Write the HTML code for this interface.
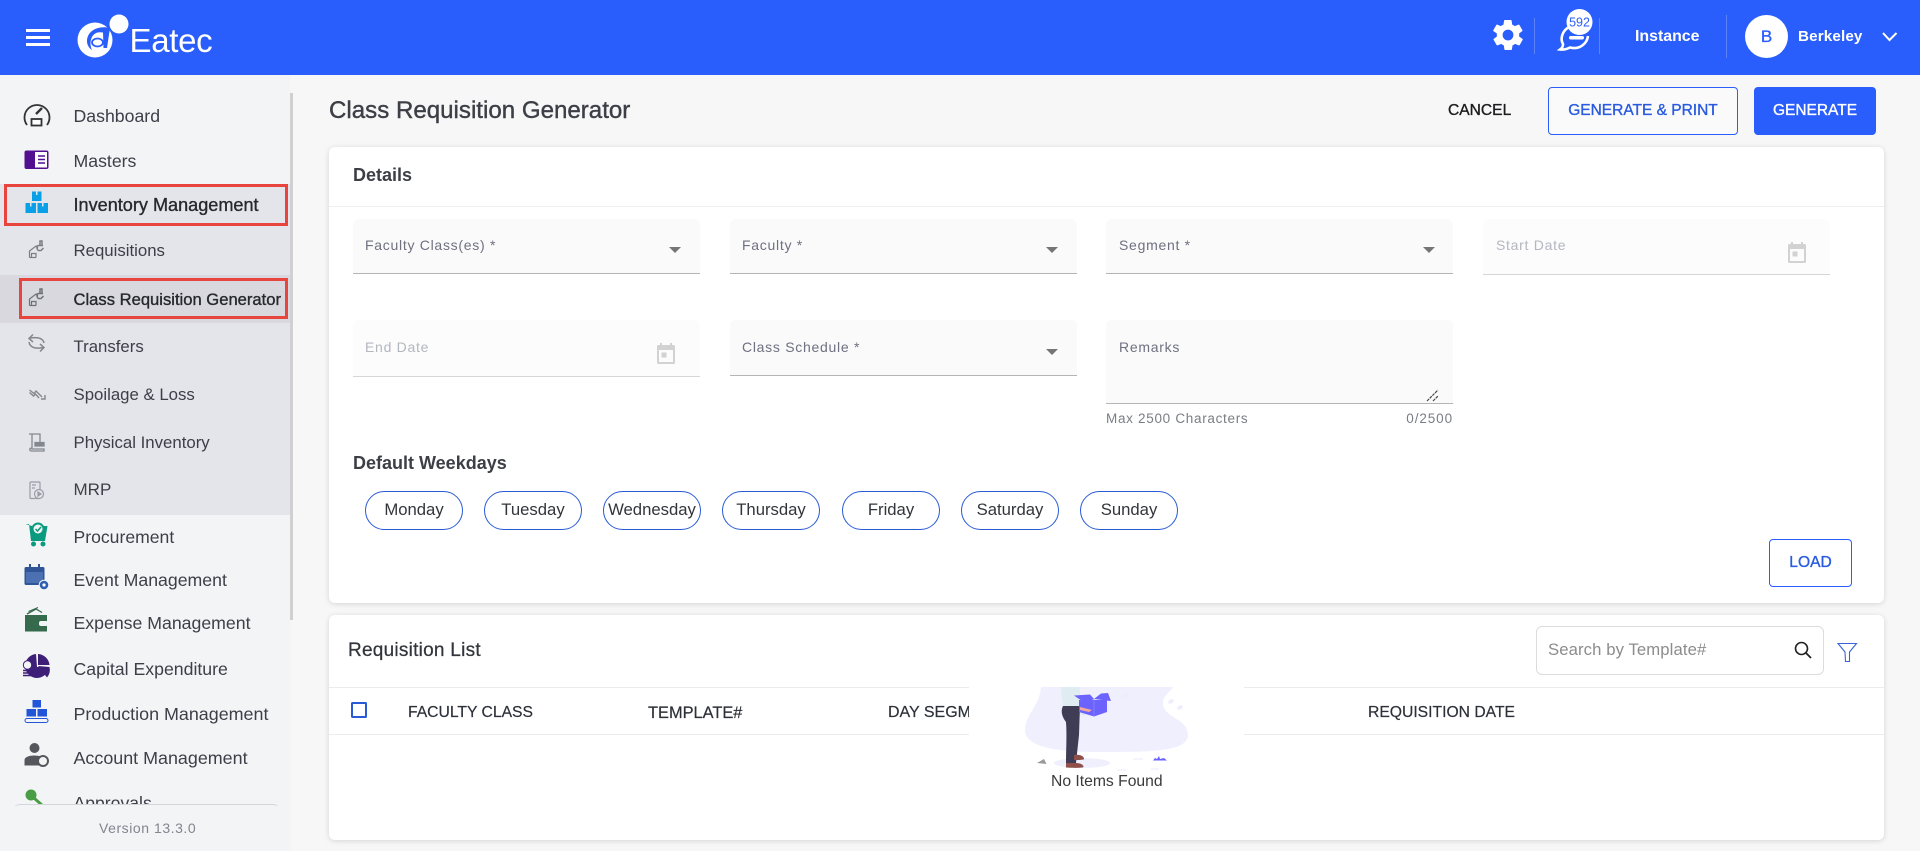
<!DOCTYPE html>
<html><head><meta charset="utf-8"><title>Class Requisition Generator</title>
<style>
*{box-sizing:border-box;margin:0;padding:0}
html,body{width:1920px;height:851px;overflow:hidden;background:#f7f7f7;font-family:"Liberation Sans",sans-serif;color:#3a3d46}
.a{position:absolute}
.t{position:absolute;white-space:nowrap;line-height:20px;height:20px}
.m{font-size:17.7px;color:#3c3f48;left:73.5px}
.b{-webkit-text-stroke:.35px currentColor}
.card{position:absolute;background:#fff;border-radius:6px;box-shadow:0 1px 6px rgba(0,0,0,.14)}
.f{position:absolute;background:#fafafa;border-radius:6px 6px 0 0;border-bottom:1px solid #b5b5b5;width:347px}
.f.d{background:#fcfcfc;border-bottom-color:#d6d6d6}
.l{font-size:14px;letter-spacing:.72px;color:#6f7080}
.l.d{color:#b4b6c0}
.chip{position:absolute;top:491px;height:39px;width:98px;border:1px solid #2a5bd7;border-radius:20px;text-align:center;line-height:36px;font-size:16.7px;color:#33353c;background:#fff;white-space:nowrap}
.arr{position:absolute;width:0;height:0;border-left:6.5px solid transparent;border-right:6.5px solid transparent;border-top:6.5px solid #757575}
.th{font-size:15.7px;color:#2c3038;top:703px;-webkit-text-stroke:.2px #2c3038}
svg{position:absolute;overflow:visible}
</style></head><body>

<!-- top bar -->
<div class="a" style="left:0;top:0;width:1920px;height:75px;background:#2a5efc"></div>
<div class="a" style="left:26px;top:29px;width:24px;height:3px;background:#fff"></div>
<div class="a" style="left:26px;top:36px;width:24px;height:3px;background:#fff"></div>
<div class="a" style="left:26px;top:43px;width:24px;height:3px;background:#fff"></div>
<svg style="left:0;top:0" width="140" height="75">
<circle cx="95" cy="40" r="17.5" fill="#fff"/>
<path d="M110 28C98 25 87 31 87 41C87 45 89 48 92 50C90 46 90 41 92 37C94 33 98 31.500 103 32.500L103.500 48L107 48Z" fill="#2a5efc"/>
<ellipse cx="97.500" cy="42.500" rx="5.500" ry="4" fill="none" stroke="#2a5efc" stroke-width="1.800"/>
<circle cx="119" cy="24" r="11.500" fill="#2a5efc"/>
<circle cx="119" cy="24" r="9.500" fill="#fff"/>
</svg>
<div class="t" style="left:129.500px;top:26px;height:30px;line-height:30px;font-size:33px;color:#fff;letter-spacing:-.3px;font-weight:400">Eatec</div>

<svg style="left:1490px;top:17px" width="36" height="36" viewBox="0 0 24 24"><path fill="#fff" d="M19.4 13a7.5 7.5 0 0 0 0-2l2.1-1.6a.5.5 0 0 0 .1-.6l-2-3.5a.5.5 0 0 0-.6-.2l-2.5 1a7.3 7.3 0 0 0-1.7-1l-.4-2.7a.5.5 0 0 0-.5-.4h-4a.5.5 0 0 0-.5.4l-.4 2.7a7.3 7.3 0 0 0-1.7 1l-2.5-1a.5.5 0 0 0-.6.2l-2 3.5a.5.5 0 0 0 .1.6L4.6 11a7.5 7.5 0 0 0 0 2l-2.100 1.600a.5.5 0 0 0-.1.6l2 3.500a.5.5 0 0 0 .6.2l2.500-1a7.300 7.300 0 0 0 1.700 1l.4 2.700a.5.5 0 0 0 .5.4h4a.5.5 0 0 0 .5-.4l.4-2.700a7.300 7.300 0 0 0 1.700-1l2.500 1a.5.5 0 0 0 .6-.2l2-3.500a.5.5 0 0 0-.1-.6zM12 15.600a3.600 3.600 0 1 1 0-7.200 3.600 3.600 0 0 1 0 7.200z"/></svg>
<div class="a" style="left:1534px;top:18px;width:1px;height:36px;background:#5d83fa"></div>
<svg style="left:1555px;top:10px" width="45" height="45">
<path d="M14 17C7 21 5 29 8 34C8 37 7 38 5 39.500C9 40 12 39 15 37.500C24 40 32 34 33 26" fill="none" stroke="#fff" stroke-width="2.600"/>
<rect x="14" y="26" width="15" height="3.500" rx="1.700" fill="#fff"/>
<circle cx="24.500" cy="12" r="13" fill="#fff"/>
<text x="24.500" y="16.500" text-anchor="middle" font-size="12.500" fill="#2a5efc" font-family="Liberation Sans">592</text>
</svg>
<div class="a" style="left:1599px;top:18px;width:1px;height:36px;background:#5d83fa"></div>
<div class="t" style="left:1635px;top:27px;font-size:15.900px;font-weight:bold;color:#fff">Instance</div>
<div class="a" style="left:1726px;top:15px;width:1px;height:43px;background:#5d83fa"></div>
<div class="a b" style="left:1745px;top:15px;width:43px;height:43px;border-radius:50%;background:#fff;text-align:center;line-height:43px;font-size:17px;color:#2a5efc">B</div>
<div class="t" style="left:1798px;top:26.500px;font-size:15.200px;font-weight:bold;color:#fff;letter-spacing:.15px">Berkeley</div>
<svg style="left:1880px;top:30px" width="20" height="14"><path d="M3 3L9.500 10L16.500 3" fill="none" stroke="#fff" stroke-width="2"/></svg>

<!-- sidebar -->
<div class="a" style="left:0;top:75px;width:290px;height:776px;background:#f3f4f6;overflow:hidden">
 <div class="a" style="left:0;top:109px;width:290px;height:331px;background:#e4e5ea"></div>
 <div class="a" style="left:0;top:200px;width:290px;height:48px;background:#d8d8de"></div>
</div>
<div class="a" style="left:290px;top:93px;width:3px;height:527px;background:#d0d0d0"></div>
<div class="a" style="left:290px;top:620px;width:3px;height:231px;background:#f6f6f6"></div>

<div class="t m" style="top:106px">Dashboard</div>
<div class="t m" style="top:151px">Masters</div>
<div class="t m b" style="top:195px;font-size:18.100px;color:#26282e;">Inventory Management</div>
<div class="t m" style="top:240.500px;font-size:16.800px">Requisitions</div>
<div class="t m b" style="top:289.500px;font-size:16.600px;color:#26282e">Class Requisition Generator</div>
<div class="t m" style="top:336.500px;font-size:16.800px">Transfers</div>
<div class="t m" style="top:384.500px;font-size:16.800px">Spoilage &amp; Loss</div>
<div class="t m" style="top:432.500px;font-size:16.800px">Physical Inventory</div>
<div class="t m" style="top:479.500px;font-size:17px">MRP</div>
<div class="t m" style="top:526.500px;font-size:17.600px">Procurement</div>
<div class="t m" style="top:569.500px;font-size:17.700px">Event Management</div>
<div class="t m" style="top:612.500px;font-size:17.700px">Expense Management</div>
<div class="t m" style="top:658.500px;font-size:17.700px">Capital Expenditure</div>
<div class="t m" style="top:703.500px;font-size:17.900px">Production Management</div>
<div class="t m" style="top:747.500px;font-size:17.900px">Account Management</div>
<div class="t m" style="top:792.500px;font-size:17.600px">Approvals</div>

<!-- red boxes -->
<div class="a" style="left:4px;top:184px;width:284px;height:42px;border:3px solid #e8453f"></div>
<div class="a" style="left:19px;top:278px;width:269px;height:41px;border:3px solid #e8453f"></div>

<!-- sidebar icons -->
<svg style="left:0;top:90px" width="60" height="761">
 <g fill="none" stroke="#333" stroke-width="1.800"><path d="M27 35A12.500 12.500 0 1 1 47 35"/></g>
 <path d="M36 24L42 18" stroke="#333" stroke-width="2.400"/>
 <rect x="31.500" y="29" width="10" height="6.500" fill="#fff" stroke="#333" stroke-width="1.800"/>
 <rect x="24.500" y="60.500" width="24" height="18.500" rx="2" fill="#520f8f"/>
 <rect x="35" y="62" width="12" height="15.500" fill="#fff"/>
 <path d="M38 66h7M38 69.500h7M38 73h7" stroke="#520f8f" stroke-width="1.400"/>
 <g fill="#0aa0e8">
  <rect x="32" y="101.500" width="9.500" height="9.500"/><rect x="25.500" y="113" width="10.500" height="10"/><rect x="37.500" y="113" width="10.500" height="10"/>
 </g>
 <g fill="#e4e5ea"><rect x="36" y="101.500" width="1.500" height="3.500"/><rect x="30" y="113" width="1.500" height="3.500"/><rect x="42" y="113" width="1.500" height="3.500"/></g>
 <g fill="none" stroke="#7b7d85" stroke-width="1.200">
  <path d="M29.500 167.500V161L36 156L38 158M36 167.500H29.500M31.500 167.500V163.500H36V167.500"/>
  <path d="M38 160.500C36 157 37 155.500 39 155.500H43M40 155.500V151H42V155M38 160.500H41L43.500 158" stroke-width="1.500"/>
 </g>
 <g fill="none" stroke="#6f7179" stroke-width="1.200" transform="translate(0,48)">
  <path d="M29.500 167.500V161L36 156L38 158M36 167.500H29.500M31.500 167.500V163.500H36V167.500"/>
  <path d="M38 160.500C36 157 37 155.500 39 155.500H43M40 155.500V151H42V155M38 160.500H41L43.500 158" stroke-width="1.500"/>
 </g>
 <g fill="none" stroke="#85878f" stroke-width="1.500">
  <path d="M44 253C43 248 37 247 30 248M33 244.500L29 248.500L33 252"/>
  <path d="M29 252C30 258 36 259 43 257.500M40 254L44 257.500L40 261.500"/>
 </g>
 <g fill="none" stroke="#85878f" stroke-width="1.400">
  <path d="M29.500 300L34 303.500L36 301L42 307"/><path d="M29.500 302.500L33.500 306L35.500 304L39 308"/>
  <path d="M41 309H45V305"/>
 </g>
 <g fill="none" stroke="#85878f" stroke-width="1.300">
  <path d="M29 344H40V355M32 344V359H44V361H32C29 361 29 358 32 358"/><path d="M35 352.500H44V356H35z" fill="#85878f"/>
 </g>
 <g fill="none" stroke="#9a9ca6" stroke-width="1.200">
  <rect x="30" y="392" width="10" height="16.500" rx="1"/><circle cx="39" cy="404" r="4.500" fill="#e4e5ea"/>
  <path d="M38 402L41 404L38 406Z" fill="#9a9ca6"/><path d="M32 395H36M32 398H35"/>
 </g>
 <g fill="#0a9a7e">
  <path d="M25.500 434H29L31 451H45L47.500 436H44C44 443 33 444 32 436Z"/>
  <circle cx="38" cy="439" r="6.500"/>
  <circle cx="33.500" cy="454" r="2.500"/><circle cx="43" cy="454" r="2.500"/>
 </g>
 <circle cx="38" cy="439" r="4.500" fill="#f3f4f6"/><path d="M35.500 439L37.500 441L41 437" stroke="#0a9a7e" fill="none" stroke-width="1.500"/>
 <rect x="24.500" y="477" width="20" height="18" rx="1.500" fill="#2f5597"/>
 <rect x="29" y="474" width="2" height="4" fill="#2f5597"/><rect x="38" y="474" width="2" height="4" fill="#2f5597"/>
 <rect x="26" y="482" width="17" height="11" fill="#4c71b3"/>
 <circle cx="44" cy="495" r="4.800" fill="#2f5fb0" stroke="#f3f4f6" stroke-width="1"/><circle cx="44" cy="495" r="1.600" fill="#fff"/>
 <path d="M25 525H47V541.500H25Z" fill="#356a4c"/>
 <path d="M27 524L36 519L42 522.500" stroke="#356a4c" stroke-width="1.300" fill="none"/>
 <path d="M28.500 521.500L38 517.500" stroke="#356a4c" stroke-width="1"/>
 <rect x="39" y="531" width="9" height="5" rx="2" fill="#f3f4f6"/>
 <path d="M36 564A12 12 0 1 0 49 577H37Z" fill="#3d1f78"/>
 <path d="M38 564A12 12 0 0 1 49.500 575H38Z" fill="#3d1f78"/>
 <path d="M38 576L47 587.500A12 12 0 0 0 49.500 577Z" fill="#3d1f78"/>
 <circle cx="27.500" cy="575" r="4.200" fill="#f3f4f6" stroke="#3d1f78"/>
 <path d="M23 580.500h8M23 583h8M23 585.500h8" stroke="#3d1f78" stroke-width="1.600"/>
 <g fill="#2355d9"><rect x="32.500" y="610" width="8.500" height="7.500"/><rect x="26.500" y="619" width="9.500" height="7.500"/><rect x="37.500" y="619" width="9.500" height="7.500"/></g>
 <rect x="25" y="628.500" width="23" height="4" rx="2" fill="#f3f4f6" stroke="#2355d9"/>
 <circle cx="34.500" cy="658" r="5" fill="#55575c"/>
 <path d="M24.500 675.500V670C24.500 664 44 664 44 670V675.500Z" fill="#55575c"/>
 <circle cx="43" cy="671" r="5" fill="#f3f4f6" stroke="#55575c" stroke-width="2"/>
 <circle cx="31" cy="705" r="5.500" fill="#4a9d45"/>
 <path d="M34 708L43 716" stroke="#4a9d45" stroke-width="3"/>
</svg>

<!-- version footer -->
<div class="a" style="left:12px;top:804px;width:269px;height:47px;background:#f3f4f6;border-top:1px solid #d4d5db;border-radius:8px 8px 0 0"></div>
<div class="a" style="left:0;top:806px;width:290px;height:45px;background:#f3f4f6"></div>
<div class="t" style="left:99px;top:818px;font-size:14px;color:#83858f;letter-spacing:.55px">Version 13.3.0</div>

<!-- page head -->
<div class="t" style="left:329px;top:99px;height:24px;line-height:24px;font-size:24.100px;color:#3d3f47;-webkit-text-stroke:.4px #3d3f47">Class Requisition Generator</div>
<div class="t b" style="left:1448px;top:100.500px;font-size:15.600px;color:#1d1d1f">CANCEL</div>
<div class="a b" style="left:1548px;top:87px;width:190px;height:48px;border:1px solid #2a5efc;border-radius:4px;background:#fafafa;color:#2a5bdf;text-align:center;line-height:46px;font-size:15.500px">GENERATE &amp; PRINT</div>
<div class="a b" style="left:1754px;top:87px;width:122px;height:48px;border-radius:4px;background:#2a5efc;color:#fff;text-align:center;line-height:48px;font-size:15.500px">GENERATE</div>

<!-- details card -->
<div class="card" style="left:329px;top:147px;width:1555px;height:456px"></div>
<div class="t" style="left:353px;top:165px;font-size:18px;font-weight:bold;color:#3d3f47">Details</div>
<div class="a" style="left:329px;top:206px;width:1555px;height:1px;background:#eeeef0"></div>

<div class="f" style="left:353px;top:219px;height:55px"></div>
<div class="f" style="left:730px;top:219px;height:55px"></div>
<div class="f" style="left:1106px;top:219px;height:55px"></div>
<div class="f d" style="left:1483px;top:219px;height:56px"></div>
<div class="f d" style="left:353px;top:320px;height:57px"></div>
<div class="f" style="left:730px;top:320px;height:56px"></div>
<div class="f" style="left:1106px;top:320px;height:84px"></div>

<div class="t l" style="left:365px;top:235px">Faculty Class(es) *</div>
<div class="t l" style="left:742px;top:235px">Faculty *</div>
<div class="t l" style="left:1119px;top:235px">Segment *</div>
<div class="t l d" style="left:1496px;top:235px">Start Date</div>
<div class="t l d" style="left:365px;top:337px">End Date</div>
<div class="t l" style="left:742px;top:337px">Class Schedule *</div>
<div class="t l" style="left:1119px;top:337px">Remarks</div>

<div class="arr" style="left:669px;top:247px"></div>
<div class="arr" style="left:1046px;top:247px"></div>
<div class="arr" style="left:1423px;top:247px"></div>
<div class="arr" style="left:1046px;top:349px"></div>

<svg style="left:653px;top:340px" width="26" height="26" viewBox="0 0 26 26"><path fill="#d2d2d2" d="M7 3h2v2h8V3h2v2h1.500A1.500 1.500 0 0 1 22 6.500v16a1.500 1.500 0 0 1-1.500 1.500h-15A1.500 1.500 0 0 1 4 22.500v-16A1.500 1.500 0 0 1 5.500 5H7zM6 10v12h14V10zm2.500 2.500h5v5h-5z"/></svg>
<svg style="left:1784px;top:239px" width="26" height="26" viewBox="0 0 26 26"><path fill="#d2d2d2" d="M7 3h2v2h8V3h2v2h1.500A1.500 1.500 0 0 1 22 6.500v16a1.500 1.500 0 0 1-1.500 1.500h-15A1.500 1.500 0 0 1 4 22.500v-16A1.500 1.500 0 0 1 5.500 5H7zM6 10v12h14V10zm2.500 2.500h5v5h-5z"/></svg>
<svg style="left:1426px;top:389px" width="14" height="14"><path d="M1 12L12 1M7 12L12 7" stroke="#444" stroke-width="1.200" stroke-dasharray="3 .8" fill="none"/></svg>

<div class="t" style="left:1106px;top:409px;font-size:13.500px;color:#7b7d85;letter-spacing:.7px">Max 2500 Characters</div>
<div class="t" style="left:1393px;top:409px;width:60px;text-align:right;font-size:13.500px;color:#7b7d85;letter-spacing:.9px">0/2500</div>

<div class="t" style="left:353px;top:453px;font-size:18px;font-weight:bold;color:#3d3f47">Default Weekdays</div>

<div class="chip" style="left:365px">Monday</div>
<div class="chip" style="left:484px">Tuesday</div>
<div class="chip" style="left:603px">Wednesday</div>
<div class="chip" style="left:722px">Thursday</div>
<div class="chip" style="left:842px">Friday</div>
<div class="chip" style="left:961px">Saturday</div>
<div class="chip" style="left:1080px">Sunday</div>

<div class="a b" style="left:1769px;top:539px;width:83px;height:48px;border:1px solid #2a5efc;border-radius:4px;background:#fff;color:#2a5bdf;text-align:center;line-height:46px;font-size:15.600px">LOAD</div>

<!-- requisition list card -->
<div class="card" style="left:329px;top:615px;width:1555px;height:225px"></div>
<div class="t" style="left:348px;top:641px;font-size:19px;color:#33353c;-webkit-text-stroke:.25px #33353c;letter-spacing:.25px">Requisition List</div>
<div class="a" style="left:1536px;top:626px;width:288px;height:49px;border:1px solid #dcdcdc;border-radius:6px;background:#fff"></div>
<div class="t" style="left:1548px;top:640px;font-size:16.700px;color:#8c8c8c;letter-spacing:.1px">Search by Template#</div>
<svg style="left:1793px;top:640px" width="20" height="20"><circle cx="8.500" cy="8.500" r="6" fill="none" stroke="#222" stroke-width="1.600"/><path d="M13 13L18 18" stroke="#222" stroke-width="1.800"/></svg>
<svg style="left:1837px;top:642px" width="22" height="22"><path d="M1 1.500H19.500L12.500 10V19.500H8.500L8 10Z" fill="none" stroke="#3a63d8" stroke-width="1.100"/></svg>

<div class="a" style="left:329px;top:687px;width:1555px;height:1px;background:#ececee"></div>
<div class="a" style="left:329px;top:734px;width:1555px;height:1px;background:#ececee"></div>
<div class="a" style="left:350.500px;top:702px;width:16px;height:16px;border:2px solid #2a5bd7;border-radius:1.500px"></div>
<div class="t th" style="left:408px">FACULTY CLASS</div>
<div class="t th" style="left:648px;font-size:16.400px">TEMPLATE#</div>
<div class="t th" style="left:888px;font-size:16px">DAY SEGMENT</div>
<div class="t th" style="left:1368px">REQUISITION DATE</div>

<!-- empty illustration -->
<div class="a" style="left:969px;top:687px;width:275px;height:105px;background:#fff;overflow:hidden">
<svg style="left:-969px;top:-687px" width="1920" height="851">
 <path d="M1041 687C1040 705 1025 715 1025 730C1025 748 1060 752 1100 752C1150 752 1188 752 1188 735C1188 718 1163 718 1163 703C1163 696 1170 692 1173 687Z" fill="#f0effe"/>
 <ellipse cx="1082" cy="763" rx="28" ry="5" fill="#f0effe"/>
 <path d="M1061 687H1080V705L1088 712L1084 716L1063 706Z" fill="#dfecf1"/>
 <path d="M1063 706C1060 712 1063 718 1066 722C1067 735 1066 750 1066 763H1076L1079 735L1080 706Z" fill="#3f3d56"/>
 <path d="M1074 755C1080 754 1084 756 1084 759C1084 760 1078 760 1074 760Z" fill="#8e5048"/>
 <path d="M1066 763H1076C1081 763 1083.500 765 1083.500 767C1083.500 768 1072 768 1066 767.500Z" fill="#8e5048"/>
 <path d="M1079 700H1107V712L1094 716.500L1079 712Z" fill="#6c63ff"/>
 <path d="M1074 695.500L1090 694.500L1094 699L1101 693.500L1108 693L1111 701L1094 699L1085 703Z" fill="#6c63ff"/>
 <path d="M1094 699V716" stroke="#8b84ff" stroke-width=".8"/>
 <path d="M1080 707L1092 710L1089 712L1080 710Z" fill="#f3a79d"/>
 <path d="M1037 763L1044 759L1046.500 764Z" fill="#9a9a9a"/>
 <path d="M1153 760.500H1167L1164 758L1160 759L1159 756L1157 759L1155 758Z" fill="#6c63ff"/>
 <ellipse cx="1125" cy="695.500" rx="3" ry="2" fill="#eeecfd"/>
 <ellipse cx="1171" cy="701.500" rx="3" ry="2" fill="#eeecfd" transform="rotate(-30 1171 701.500)"/>
 <ellipse cx="1180" cy="707.500" rx="3" ry="2" fill="#eeecfd" transform="rotate(-30 1180 707.500)"/>
 <path d="M1133 759h10M1117 770h9M1151 769h8" stroke="#f0effe" stroke-width="1.200"/>
</svg>
</div>
<div class="t" style="left:1051px;top:771.500px;font-size:15.700px;color:#3a3a3a">No Items Found</div>
</body></html>
